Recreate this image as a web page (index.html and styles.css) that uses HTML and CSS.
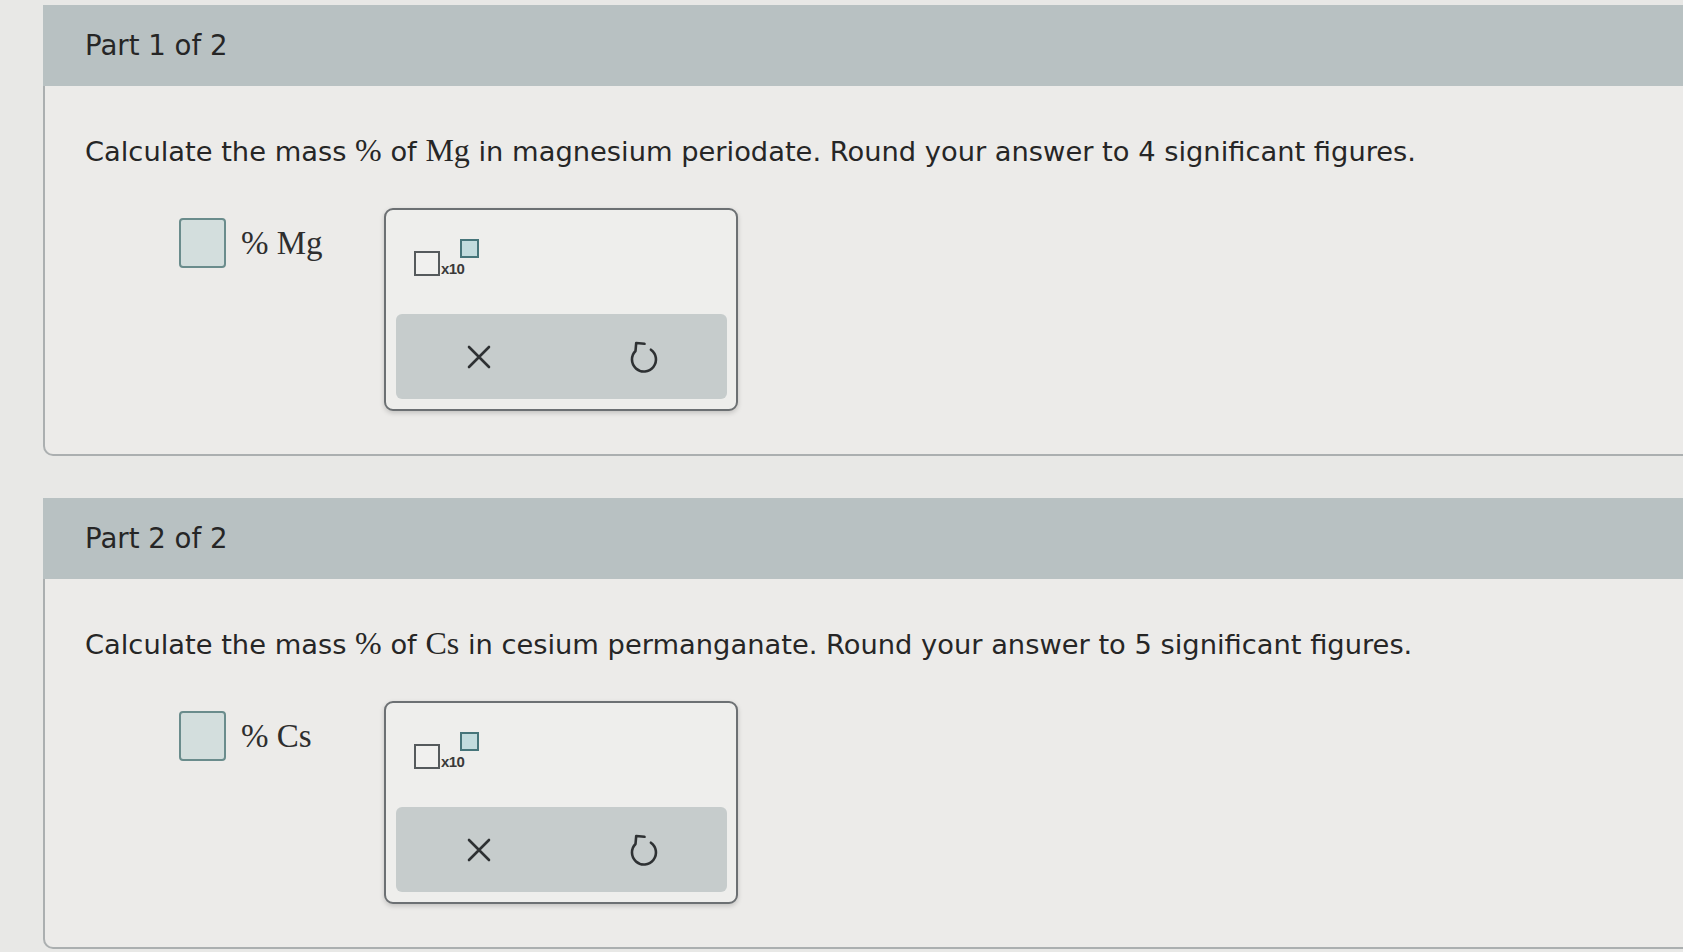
FILE: index.html
```html
<!DOCTYPE html>
<html lang="en">
<head>
	<meta charset="UTF-8">
	<title>Mass percent</title>
	<link rel="stylesheet" href="styles.css">
</head>
<body>
<div class="page">
	<section class="part">
		<div class="part__header">Part 1 of 2</div>
		<div class="part__body">
			<p class="part__question">Calculate the mass <span class="math">%</span> of <span class="math">Mg</span> in magnesium periodate. Round your answer to 4 significant figures.</p>
			<div class="answer">
				<div class="answer__field">
					<span class="answer__input"></span>
					<span class="answer__unit">% Mg</span>
				</div>
				<div class="keypad">
					<div class="keypad__sci">
						<span class="keypad__base"></span>
						<span class="keypad__x10">x10</span>
						<span class="keypad__exp"></span>
					</div>
					<div class="keypad__actions">
						<button class="keypad__button" title="Clear">
							<svg width="28" height="28" viewBox="0 0 28 28"><path d="M4 4 L24 24 M24 4 L4 24" /></svg>
						</button>
						<button class="keypad__button" title="Undo">
							<svg width="36" height="38" viewBox="0 0 36 38"><path d="M18.5 5.8 L10.2 5 L9.5 13 A12 12 0 1 0 24.9 11.7" /></svg>
						</button>
					</div>
				</div>
			</div>
		</div>
	</section>

	<section class="part">
		<div class="part__header">Part 2 of 2</div>
		<div class="part__body">
			<p class="part__question">Calculate the mass <span class="math">%</span> of <span class="math">Cs</span> in cesium permanganate. Round your answer to 5 significant figures.</p>
			<div class="answer">
				<div class="answer__field">
					<span class="answer__input"></span>
					<span class="answer__unit">% Cs</span>
				</div>
				<div class="keypad">
					<div class="keypad__sci">
						<span class="keypad__base"></span>
						<span class="keypad__x10">x10</span>
						<span class="keypad__exp"></span>
					</div>
					<div class="keypad__actions">
						<button class="keypad__button" title="Clear">
							<svg width="28" height="28" viewBox="0 0 28 28"><path d="M4 4 L24 24 M24 4 L4 24" /></svg>
						</button>
						<button class="keypad__button" title="Undo">
							<svg width="36" height="38" viewBox="0 0 36 38"><path d="M18.5 5.8 L10.2 5 L9.5 13 A12 12 0 1 0 24.9 11.7" /></svg>
						</button>
					</div>
				</div>
			</div>
		</div>
	</section>
</div>
</body>
</html>
```

FILE: styles.css
```css
body {
    margin: 0;
    background-color: #e8e8e6;
    font-family: "DejaVu Sans", Verdana, sans-serif;
    color: #262626;
    overflow: hidden;
}

.page {
    display: flex;
    flex-direction: column;
    gap: 42px;
    padding: 5px 0 0 43px;
}

.part {
    margin-right: -24px;
    background-color: #ecebe9;
    border-left: 2px solid #abafb0;
    border-bottom: 2px solid #abafb0;
    border-bottom-left-radius: 10px;
}

.part__header {
    display: flex;
    align-items: center;
    height: 81px;
    margin-left: -2px;
    padding-left: 42px;
    background-color: #b8c1c2;
    font-size: 27.6px;
}

.part__body {
    padding: 46px 0 43px 40px;
}

.part__question {
    margin: 0 0 38px;
    font-size: 27.3px;
    line-height: 36px;
}

.math {
    font-family: "Liberation Serif", "Times New Roman", serif;
    font-size: 32px;
}

.answer {
    display: flex;
    align-items: flex-start;
}

.answer__field {
    display: flex;
    align-items: center;
    gap: 15px;
    width: 205px;
    margin-left: 94px;
    padding-top: 10px;
}

.answer__input {
    width: 47px;
    height: 50px;
    box-sizing: border-box;
    border: 2px solid #6a8c8c;
    border-radius: 4px;
    background-color: #d3dedd;
}

.answer__unit {
    font-family: "Liberation Serif", "Times New Roman", serif;
    font-size: 33px;
    color: #2e2e2e;
}

.keypad {
    width: 354px;
    height: 203px;
    box-sizing: border-box;
    border: 2px solid #6c7073;
    border-radius: 9px;
    background-color: #eeeeec;
    box-shadow: 0 2px 5px rgba(0, 0, 0, 0.18);
}

.keypad__sci {
    display: flex;
    align-items: flex-start;
    height: 104px;
    box-sizing: border-box;
    padding: 29px 0 0 28px;
}

.keypad__base {
    width: 26px;
    height: 25px;
    box-sizing: border-box;
    margin-top: 12px;
    border: 2px solid #555a5c;
    background-color: #f0f0ee;
}

.keypad__x10 {
    margin: 22px 0 0 1px;
    font-family: "Liberation Sans", Arial, sans-serif;
    font-size: 15px;
    font-weight: bold;
    line-height: 15px;
    letter-spacing: -0.6px;
    color: #3a3a3a;
}

.keypad__exp {
    width: 19px;
    height: 19px;
    box-sizing: border-box;
    margin-left: -4px;
    border: 2px solid #46757a;
    background-color: #c2dcde;
}

.keypad__actions {
    display: flex;
    height: 85px;
    margin: 0 9px 0 10px;
    border-radius: 6px;
    background-color: #c6cccc;
}

.keypad__button {
    display: flex;
    flex: 1;
    align-items: center;
    justify-content: center;
    padding: 0;
    border: none;
    background: none;
}

.keypad__button svg {
    fill: none;
    stroke: #2e3133;
    stroke-width: 2.6;
    stroke-linecap: round;
    stroke-linejoin: round;
}
```
